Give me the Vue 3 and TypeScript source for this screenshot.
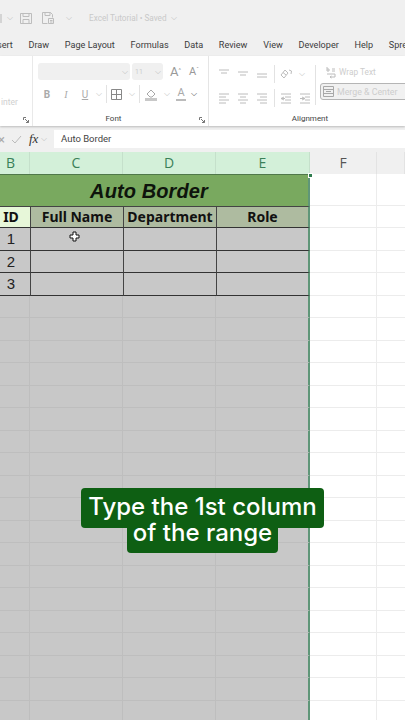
<script setup lang="ts">
const tabs = ['sert', 'Draw', 'Page Layout', 'Formulas', 'Data', 'Review', 'View', 'Developer', 'Help', 'Spre']
const colHeads = [
  { t: 'B', c: 'ch sel' }, { t: 'C', c: 'ch sel' }, { t: 'D', c: 'ch sel' }, { t: 'E', c: 'ch sel' }, { t: 'F', c: 'ch' }, { t: '', c: 'ch' },
]
const dataRows = ['1', '2', '3']
const emptyRows = Array.from({ length: 19 }, (_, i) => i)
const alignTop = ['M1 2h10M3 5h6', 'M1 4h10M3 7h6', 'M1 6h10M1 9h10']
const alignBottom = ['M1 2h10M1 5h7M1 8h10M1 11h7', 'M1 2h10M3 5h6M1 8h10M3 11h6', 'M1 2h10M4 5h7M1 8h10M4 11h7']
const indents = ['M1 2h10M5 5h6M1 6.500l3-1.500M1 6.500l3 1.500M1 6.500h4M5 8h6M1 11h10', 'M1 2h10M6 5h5M6 6.500l-3-1.500M6 6.500l-3 1.500M1 6.500h5M6 8h5M1 11h10']
</script>

<template>
  <main class="app">
    <header class="title">
      <span class="stub"></span>
      <span class="chev first">⌵</span>
      <svg class="qa" width="12" height="11" viewBox="0 0 12 11"><path d="M.5.500h11v10H.5zM3 .5v3h6v-3M3 6.500h6v4H3z" /></svg>
      <svg class="qa q2" width="12" height="12" viewBox="0 0 12 12"><path d="M.5.500h8l2 2v3M.5.500v11h5M3 .5v3h5v-3M6.500 6.500h5v5h-5zM8 8.500h2.500M8 10h2.500" /></svg>
      <span class="chev q3">⌵</span>
      <span class="doc">Excel Tutorial • Saved</span>
      <span class="chev q4">⌵</span>
    </header>

    <nav class="tabs">
      <span v-for="t in tabs" :key="t" class="tab">{{ t }}</span>
    </nav>

    <section class="ribbon">
      <div class="grp clip">
        <span class="painter">inter</span>
        <svg class="launch" width="6" height="6" viewBox="0 0 6 6"><path d="M.5 3V.5H3M2 2l3.500 3.500M5.500 3v2.500H3" /></svg>
      </div>

      <div class="grp font">
        <div class="fontbody">
          <div class="row r1">
            <div class="fbox name"><span class="chev">⌵</span></div>
            <div class="fbox size"><span class="dim">11</span><span class="chev">⌵</span></div>
            <span class="bigA">A<sup>^</sup></span>
            <span class="smallA">A<sup>ˇ</sup></span>
          </div>
          <div class="row r2">
            <b class="glyph b">B</b>
            <i class="glyph i">I</i>
            <u class="glyph u">U</u>
            <span class="chev c1">⌵</span>
            <span class="vd"></span>
            <svg class="border" width="11" height="11" viewBox="0 0 11 11"><path d="M.5.500h10v10H.5zM5.500 .5v10M.5 5.500h10" /></svg>
            <span class="chev c2">⌵</span>
            <span class="vd"></span>
            <svg class="fill" width="12" height="13" viewBox="0 0 12 13"><path d="M2 6l4-4 4 4-3 3H5z" /><rect x="0" y="10" width="12" height="3" /></svg>
            <span class="chev c3">⌵</span>
            <span class="fcolor">A</span>
            <span class="chev dark">⌵</span>
          </div>
        </div>
        <div class="glabel">Font</div>
        <svg class="launch" width="6" height="6" viewBox="0 0 6 6"><path d="M.5 3V.5H3M2 2l3.500 3.500M5.500 3v2.500H3" /></svg>
      </div>

      <div class="grp align">
        <div class="alignbody">
          <div class="alignicons">
            <div class="row">
              <svg v-for="p in alignTop" :key="p" class="ai" width="12" height="12" viewBox="0 0 12 12"><path :d="p" /></svg>
              <span class="vd v2"></span>
              <svg class="ai orient" width="12" height="12" viewBox="0 0 12 12"><path d="M1 7l4-5 3 3-4 5zM3 4.500l3 2.500M9 2l2.500 1-.5 3" /></svg>
              <span class="chev">⌵</span>
            </div>
            <div class="row">
              <svg v-for="p in alignBottom" :key="p" class="ai" width="12" height="13" viewBox="0 0 12 13"><path :d="p" /></svg>
              <span class="vd v2"></span>
              <svg v-for="p in indents" :key="p" class="ai ind" width="12" height="13" viewBox="0 0 12 13"><path :d="p" /></svg>
            </div>
          </div>
          <span class="vd tall"></span>
          <div class="wrapcol">
            <div class="wrap">
              <svg class="ai" width="10" height="13" viewBox="0 0 10 13"><path d="M1 1v4M1 3h2v2H1M6 3h3M6 5h3M1 8h8v3H4M4 11l1.500-1M4 11l1.500 1" /></svg>
              <span>Wrap Text</span>
            </div>
            <div class="merge">
              <svg class="ai mi" width="11" height="11" viewBox="0 0 11 11"><path d="M.5.500h10v10H.5zM.5 3.500h10M.5 7.500h10M3 5.500h5" /></svg>
              <span>Merge &amp; Center</span>
            </div>
          </div>
        </div>
        <div class="glabel">Alignment</div>
      </div>
    </section>

    <div class="formula">
      <div class="fx-tools">
        <span class="x">×</span>
        <svg class="check" width="11" height="9" viewBox="0 0 11 9"><path d="M1 5l3 3 6-7" /></svg>
        <i class="fx">fx</i>
        <span class="chev">⌵</span>
      </div>
      <div class="input">Auto Border</div>
    </div>

    <section class="sheet">
      <div class="gr heads">
        <div v-for="h in colHeads" :key="h.t + h.c" :class="h.c">{{ h.t }}</div>
      </div>

      <div class="gr titlerow">
        <div class="tcell">Auto Border</div>
        <div class="w"></div><div class="w last"></div>
      </div>

      <div class="gr hrow">
        <div class="idc">ID</div>
        <div class="hc">Full Name</div>
        <div class="hc">Department</div>
        <div class="hc e">Role</div>
        <div class="w"></div><div class="w last"></div>
      </div>

      <div v-for="(r, i) in dataRows" :key="r" class="gr" :class="i % 2 ? 'short' : 'tall-row'">
        <div class="dc num">{{ r }}</div>
        <div class="dc"></div>
        <div class="dc"></div>
        <div class="dc e"></div>
        <div class="w"></div><div class="w last"></div>
      </div>

      <div v-for="i in emptyRows" :key="i" class="gr" :class="i % 2 ? 'tall-row' : 'short'">
        <div class="ec"></div><div class="ec"></div><div class="ec"></div><div class="ec e"></div>
        <div class="w"></div><div class="w last"></div>
      </div>

      <svg class="cursor" width="11" height="11" viewBox="0 0 11 11"><path d="M4 1h3v3h3v3H7v3H4V7H1V4h3z" /></svg>
      <span class="handle"></span>
    </section>

    <div class="caption">
      <span class="l1">Type the 1st column</span>
      <span class="l2">of the range</span>
    </div>
  </main>
</template>

<style>
html, body { margin: 0; background: #f0f0f0; overflow: hidden; }
</style>

<style scoped>
.app {
  position: relative;
  width: 405px;
  height: 720px;
  overflow: hidden;
  background: #f0f0f0;
  font-family: Roboto, "Noto Sans", sans-serif;
  color: #333;
}
svg { display: block; flex: none; }
svg path { fill: none; stroke: currentColor; stroke-width: 1; }

.chev { font-size: 8px; color: #bbb; line-height: 1; flex: none; }

.title {
  height: 30px;
  display: flex;
  align-items: center;
  color: #c4c4c4;
  padding-top: 6px;
  box-sizing: border-box;
}
.stub { width: 2px; height: 9px; background: #d4d4d4; flex: none; }
.chev.first { margin-left: 5px; }
.qa { margin-left: 7px; color: #bdbdbd; }
.q2 { margin-left: 10px; }
.chev.q3 { margin-left: 12px; }
.doc { font-size: 8.200px; margin-left: 17px; color: #c9c9c9; white-space: nowrap; }
.chev.q4 { margin-left: 4px; }

.tabs {
  height: 26px;
  box-sizing: border-box;
  padding-top: 4px;
  display: flex;
  align-items: center;
  gap: 15.700px;
  margin-left: -3px;
  font-size: 9.100px;
  color: #3c3c3c;
  white-space: nowrap;
}

.ribbon {
  height: 70px;
  background: #fff;
  display: flex;
  box-shadow: 0 1px 2px rgba(0, 0, 0, .22);
  position: relative;
  font-size: 8.500px;
}
.grp { position: relative; box-sizing: border-box; flex: none; }
.clip { width: 33px; border-right: 1px solid #e9e9e9; }
.painter { position: absolute; left: 1px; top: 41px; color: #cfcfcf; }
.launch { position: absolute; right: 3px; bottom: 3px; color: #777; }
.font { width: 176px; border-right: 1px solid #e5e5e5; padding: 7px 0 0 5px; }
.fontbody { display: flex; flex-direction: column; gap: 5px; }
.row { display: flex; align-items: center; }
.r1 { height: 17px; }
.r2 { height: 18px; color: #b0b0b0; }
.fbox {
  height: 17px;
  background: #f0f0f0;
  border-radius: 3px;
  display: flex;
  align-items: center;
  justify-content: flex-end;
  box-sizing: border-box;
  padding-right: 2px;
  margin-right: 2px;
}
.name { width: 92px; }
.size { width: 31px; justify-content: space-between; padding-left: 3px; }
.dim { font-size: 7px; color: #ccc; }
.bigA { font-size: 13px; color: #999; margin-left: 5px; line-height: 1; }
.smallA { font-size: 11px; color: #999; margin-left: 8px; line-height: 1; }
sup { font-size: 6px; vertical-align: 4px; line-height: 0; }
.glyph { font-size: 10px; color: #aaa; width: 10px; text-align: center; }
.b { margin-left: 4px; }
.i { margin-left: 9px; font-family: "Liberation Serif", serif; font-weight: 400; }
.u { margin-left: 9px; }
.c1 { margin-left: 6px; }
.vd { width: 1px; height: 18px; background: #e2e2e2; flex: none; }
.r2 .vd { margin-left: 4px; }
.border { margin-left: 4px; color: #888; }
.c2 { margin-left: 7px; }
.fill { margin-left: 5px; color: #a8a8a8; }
.fill rect { fill: #c8c8c8; }
.c3 { margin-left: 7px; }
.fcolor {
  margin-left: 6px;
  width: 10px;
  font-size: 11px;
  color: #aaa;
  line-height: 12px;
  text-align: center;
  border-bottom: 2px solid #bbb;
}
.chev.dark { margin-left: 5px; color: #333; }
.glabel {
  position: absolute;
  bottom: 1px;
  left: 0;
  right: 0;
  text-align: center;
  font-size: 8px;
  color: #444;
  line-height: 12px;
}
.align { flex: 1; min-width: 0; }
.font .glabel { right: 14px; }
.align .glabel { left: 1px; width: 200px; }
.alignbody { display: flex; padding: 9px 0 0 9px; height: 46px; overflow: hidden; box-sizing: content-box; }
.alignicons { display: flex; flex-direction: column; gap: 6px; width: 97px; flex: none; }
.alignicons .row { height: 18px; color: #b6b6b6; gap: 7px; }
.ai { color: #bcbcbc; }
.v2 { margin: 0 -2px 0 -1px; }
.ind { margin-right: 0; }
.tall { height: 40px; }
.wrapcol { display: flex; flex-direction: column; gap: 2px; margin-left: 4px; margin-top: -2px; white-space: nowrap; }
.wrap, .merge { display: flex; align-items: center; gap: 3px; font-size: 8.800px; color: #cdcdcd; }
.wrap { height: 18px; padding-left: 6px; font-size: 8.300px; }
.merge {
  height: 17px;
  width: 110px;
  box-sizing: border-box;
  border: 1px solid #b5b5b5;
  border-radius: 3px;
  background: #f1f1f1;
  padding-left: 2px;
}
.mi { color: #a8a8a8; }

.formula {
  margin-top: 4px;
  height: 18px;
  display: flex;
}
.fx-tools { width: 54px; display: flex; align-items: center; color: #bbb; flex: none; }
.x { font-size: 13px; margin-left: -2px; color: #aaa; line-height: 1; }
.check { margin-left: 6px; }
.fx { font-family: "Liberation Serif", serif; font-size: 13px; color: #333; margin-left: 7px; }
.fx-tools .chev { margin-left: 3px; }
.input {
  flex: 1;
  background: #fff;
  font-size: 9.500px;
  line-height: 18px;
  padding-left: 7px;
  color: #444;
}

.sheet { position: relative; margin: 4px 0 0 -8px; width: 413px; background: #fff; }
.gr { display: grid; grid-template-columns: 38px 93px 93px 94px 67px 28px; }
.heads { height: 22px; background: #f0f0f0; }
.ch {
  font: 400 14px/22px "Open Sans", sans-serif;
  text-align: center;
  color: #555;
  box-sizing: border-box;
  border-right: 1px solid #e3e3e3;
}
.ch.sel { background: #d3f0d9; color: #3a8058; border-right-color: #c5e0cb; }

.titlerow { height: 32px; }
.tcell {
  grid-column: 1 / 5;
  background: #79a95f;
  font: italic 700 20px/30px "Liberation Sans", sans-serif;
  letter-spacing: .1px;
  text-align: center;
  color: #0e140c;
  box-sizing: border-box;
  border-top: 1px solid #50784a;
  border-right: 2px solid #5f9678;
  padding: 1px 2px 0 0;
}
.hrow { height: 22px; }
.idc {
  background: #e7f7d9;
  font: 700 14px/20px "Noto Sans", sans-serif;
  text-align: center;
  color: #111;
  box-sizing: border-box;
  border-top: 1px solid #444;
  border-bottom: 1px solid #333;
}
.hc {
  background: #aebba0;
  font: 700 14px/20px "Noto Sans", sans-serif;
  color: #111;
  text-align: center;
  box-sizing: border-box;
  border-top: 1px solid #444;
  border-bottom: 1px solid #333;
  border-left: 1px solid #444;
  white-space: nowrap;
}
.tall-row { height: 23px; }
.short { height: 22px; }
.dc {
  background: #c8c8c8;
  box-sizing: border-box;
  border-bottom: 1px solid #333;
  border-left: 1px solid #444;
  min-height: 0;
}
.num {
  border-left: 0;
  font: 400 15px/21px "Liberation Sans", sans-serif;
  text-align: center;
  color: #222;
}
.e { border-right: 2px solid #5f9678; }
.ec {
  background: #c8c8c8;
  box-sizing: border-box;
  border-bottom: 1px solid #bebebe;
  border-right: 1px solid #bebebe;
}
.ec.e { border-right: 2px solid #5f9678; }
.w { box-sizing: border-box; border-bottom: 1px solid #ececec; border-right: 1px solid #ececec; }
.w.last { border-right: 0; }
.cursor { position: absolute; left: 77px; top: 79px; }
.cursor path { fill: #fff; stroke: #111; }
.handle { position: absolute; left: 316px; top: 21px; width: 3px; height: 3px; background: #2f7d4f; border: 1px solid #fff; }

.caption {
  position: absolute;
  left: 0;
  right: 0;
  top: 488px;
  display: flex;
  flex-direction: column;
  align-items: center;
  color: #fff;
  font: 500 24px/26px Inter, sans-serif;
  pointer-events: none;
}
.caption span { background: #0e5f13; white-space: nowrap; position: relative; }
.l1 { padding: 6px 7px 2px; border-radius: 4px 4px 0 0; }
.l1::after {
  content: "";
  position: absolute;
  left: 0;
  right: 0;
  bottom: -6px;
  height: 6px;
  background: #0e5f13;
  border-radius: 0 0 4px 4px;
}
.l2 { padding: 0 6px 9px; line-height: 22px; border-radius: 0 0 4px 4px; z-index: 1; }
</style>
